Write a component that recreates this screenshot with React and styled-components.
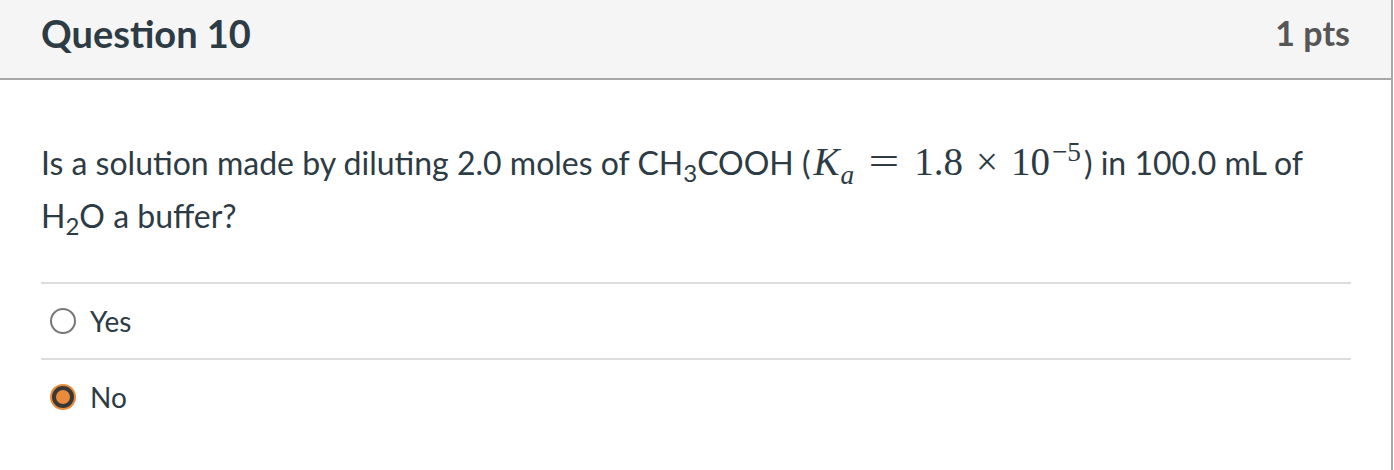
import React from "react";
import styled, { createGlobalStyle } from "styled-components";

const GlobalStyle = createGlobalStyle`
  html, body {
    margin: 0;
    padding: 0;
    background: #ffffff;
  }
  body {
    font-family: Lato, "Noto Sans", sans-serif;
    color: #2d3b45;
  }
`;

const Card = styled.div`
  width: 1391px;
  height: 470px;
  border-right: 2px solid #a8a8a8;
  background: #ffffff;
`;

const Header = styled.div`
  height: 80px;
  box-sizing: border-box;
  display: flex;
  align-items: flex-start;
  justify-content: space-between;
  padding: 10px 41px 0 41px;
  background: #f5f5f5;
  border-bottom: 2px solid #a8a8a8;
`;

const Title = styled.h2`
  margin: 0;
  font-size: 38px;
  line-height: 46px;
  font-weight: 700;
  color: #2d3b45;
`;

const Points = styled.span`
  font-size: 34px;
  line-height: 46px;
  font-weight: 700;
  color: #565656;
`;

const Body = styled.div`
  padding: 56px 40px 0 41px;
`;

const QuestionText = styled.p`
  margin: 0 0 40px;
  font-size: 32px;
  line-height: 53px;

  sub {
    font-size: 0.75em;
    line-height: 0;
  }
`;

const Math = styled.span`
  font-family: "Liberation Serif", "DejaVu Serif", serif;
  font-size: 39px;
  line-height: 0;
  margin: 0 3px;

  sub,
  sup {
    font-size: 0.7em;
    line-height: 0;
  }
  sub {
    margin-left: 1px;
  }
  sup {
    margin-left: 2px;
  }
`;

const Italic = styled.i`
  font-style: italic;
`;

const Op = styled.span`
  display: inline-block;
  margin: 0 ${(p) => p.space}px;
  transform: scaleX(${(p) => p.stretch || 1});
`;

const Answers = styled.div``;

const Answer = styled.label`
  display: flex;
  align-items: center;
  gap: 14px;
  height: 74px;
  border-top: 2px solid #dddddd;
  font-size: 28px;
  padding-left: 9px;
`;

const Radio = styled.span`
  box-sizing: border-box;
  width: ${(p) => (p.checked ? "22px" : "26px")};
  height: ${(p) => (p.checked ? "22px" : "26px")};
  margin: ${(p) => (p.checked ? "2px" : "0")};
  border-radius: 50%;
  border: ${(p) => (p.checked ? "4px solid #383838" : "2px solid #777777")};
  background: ${(p) => (p.checked ? "#ea8a3b" : "#ffffff")};
  box-shadow: ${(p) => (p.checked ? "0 0 0 2px #ea8a3b" : "none")};
`;

function App() {
  return (
    <>
      <GlobalStyle />
      <Card>
        <Header>
          <Title>Question 10</Title>
          <Points>1 pts</Points>
        </Header>
        <Body>
          <QuestionText>
            Is a solution made by diluting 2.0 moles of CH<sub>3</sub>COOH (
            <Math>
              <Italic>K</Italic>
              <sub>
                <Italic>a</Italic>
              </sub>
              <Op space={19} stretch={1.4}>
                =
              </Op>
              1.8
              <Op space={13}>×</Op>
              10
              <sup>−5</sup>
            </Math>
            ) in 100.0 mL of H<sub>2</sub>O a buffer?
          </QuestionText>
          <Answers>
            <Answer>
              <Radio />
              Yes
            </Answer>
            <Answer>
              <Radio checked />
              No
            </Answer>
          </Answers>
        </Body>
      </Card>
    </>
  );
}

export default App;
